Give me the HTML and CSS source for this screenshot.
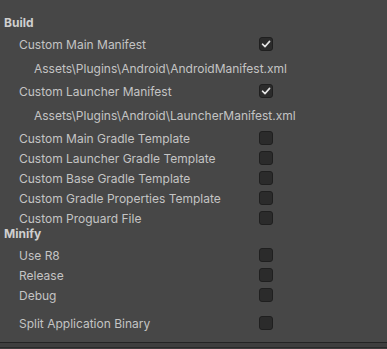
FILE: index.html
```html
<!DOCTYPE html>
<html>
<head>
<meta charset="utf-8">
<link rel="stylesheet" href="styles.css">
</head>
<body>
<div class="panel">
  <div class="header h-build">Build</div>
  <div class="row r-main"><span class="label">Custom Main Manifest</span><span class="box checked"><svg viewBox="0 0 14 14" width="14" height="14"><path d="M3.5 7.2 L6 9.6 L10.6 4.4" fill="none" stroke="#e4e4e4" stroke-width="1.6" stroke-linecap="round" stroke-linejoin="round"/></svg></span></div>
  <div class="row path r-a1"><span class="label">Assets\Plugins\Android\AndroidManifest.xml</span></div>
  <div class="row r-launch"><span class="label">Custom Launcher Manifest</span><span class="box checked"><svg viewBox="0 0 14 14" width="14" height="14"><path d="M3.5 7.2 L6 9.6 L10.6 4.4" fill="none" stroke="#e4e4e4" stroke-width="1.6" stroke-linecap="round" stroke-linejoin="round"/></svg></span></div>
  <div class="row path r-a2"><span class="label">Assets\Plugins\Android\LauncherManifest.xml</span></div>
  <div class="row r-g1"><span class="label">Custom Main Gradle Template</span><span class="box"></span></div>
  <div class="row r-n"><span class="label">Custom Launcher Gradle Template</span><span class="box"></span></div>
  <div class="row r-n"><span class="label">Custom Base Gradle Template</span><span class="box"></span></div>
  <div class="row r-n"><span class="label">Custom Gradle Properties Template</span><span class="box"></span></div>
  <div class="row r-n"><span class="label">Custom Proguard File</span><span class="box"></span></div>
  <div class="header h-minify">Minify</div>
  <div class="row r-r8"><span class="label">Use R8</span><span class="box"></span></div>
  <div class="row r-n"><span class="label">Release</span><span class="box"></span></div>
  <div class="row r-n"><span class="label">Debug</span><span class="box"></span></div>
  <div class="row r-split"><span class="label">Split Application Binary</span><span class="box"></span></div>
</div>
<div class="footer"></div>
</body>
</html>
```
FILE: styles.css
```css
html, body {
  margin: 0;
  padding: 0;
  background: #474747;
  width: 387px;
  height: 349px;
  overflow: hidden;
}
.panel {
  height: 342px;
  display: flex;
  flex-direction: column;
  font-family: Inter, "Noto Sans", sans-serif;
  font-size: 12px;
  color: #c4c4c4;
  padding-top: 14px;
  box-sizing: border-box;
}
.header {
  height: 18px;
  line-height: 18px;
  padding-left: 4px;
  font-weight: 700;
  color: #cfcfcf;
}
.row {
  height: 18px;
  display: flex;
  align-items: center;
  padding-left: 19px;
  position: relative;
}
.row .label {
  width: 240px;
  white-space: nowrap;
}
.row.path { padding-left: 34px; }
.box {
  width: 14px;
  height: 14px;
  box-sizing: border-box;
  background: #2b2b2b;
  border: 1px solid #1f1f1f;
  border-radius: 3px;
  display: flex;
  align-items: center;
  justify-content: center;
}
.box svg { display: block; margin: -1px; }
.r-main { margin-top: 3px; }
.r-a1 { margin-top: 6px; }
.r-launch { margin-top: 5px; }
.r-a2 { margin-top: 6px; }
.r-g1 { margin-top: 5px; }
.r-n { margin-top: 2px; }
.h-minify { margin-top: -2px; }
.r-r8 { margin-top: 3px; }
.r-split { margin-top: 10px; }
.footer {
  height: 7px;
  border-top: 1px solid #242424;
  background: #3e3e3e;
  box-sizing: border-box;
  position: relative;
}
.footer::after {
  content: "";
  display: block;
  margin-top: 4px;
  border-top: 1px solid #2a2a2a;
}
```
